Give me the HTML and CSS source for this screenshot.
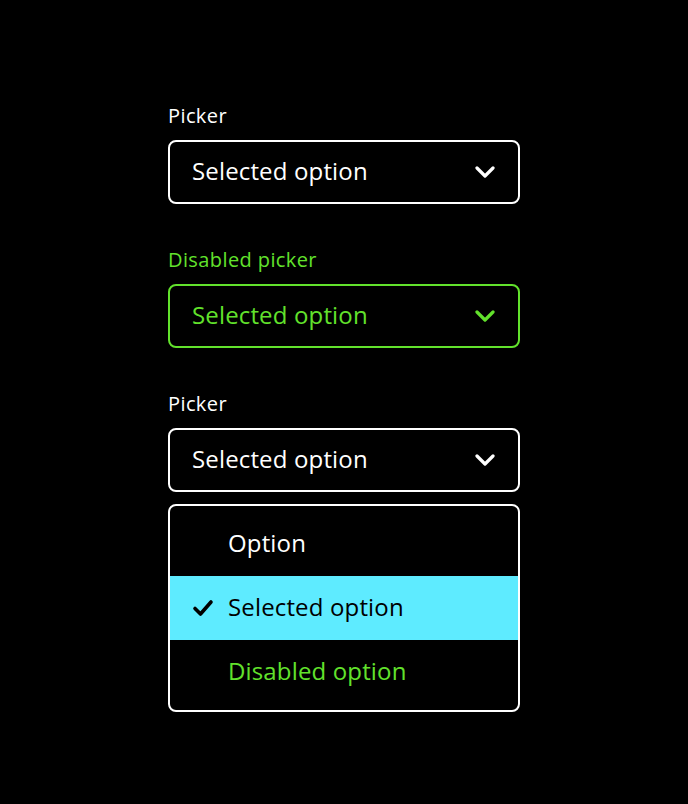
FILE: index.html
```html
<!DOCTYPE html>
<html>
<head>
<meta charset="utf-8">
<link rel="stylesheet" href="styles.css">
</head>
<body>
<main class="stack">
  <section class="field">
    <div class="label">Picker</div>
    <div class="picker">
      <span class="value">Selected option</span>
      <svg class="chev" width="20" height="12" viewBox="0 0 20 12"><path d="M2 2 L10 10 L18 2" fill="none" stroke="currentColor" stroke-width="3.2" stroke-linecap="round" stroke-linejoin="round"/></svg>
    </div>
  </section>
  <section class="field disabled">
    <div class="label">Disabled picker</div>
    <div class="picker">
      <span class="value">Selected option</span>
      <svg class="chev" width="20" height="12" viewBox="0 0 20 12"><path d="M2 2 L10 10 L18 2" fill="none" stroke="currentColor" stroke-width="3.2" stroke-linecap="round" stroke-linejoin="round"/></svg>
    </div>
  </section>
  <section class="field">
    <div class="label">Picker</div>
    <div class="picker">
      <span class="value">Selected option</span>
      <svg class="chev" width="20" height="12" viewBox="0 0 20 12"><path d="M2 2 L10 10 L18 2" fill="none" stroke="currentColor" stroke-width="3.2" stroke-linecap="round" stroke-linejoin="round"/></svg>
    </div>
    <ul class="menu">
      <li class="item"><span class="check"></span><span>Option</span></li>
      <li class="item selected"><span class="check"><svg width="22" height="18" viewBox="0 0 22 18"><path d="M3 9.5 L8.5 15 L19 3" fill="none" stroke="currentColor" stroke-width="3.6" stroke-linecap="round" stroke-linejoin="round"/></svg></span><span>Selected option</span></li>
      <li class="item dis"><span class="check"></span><span>Disabled option</span></li>
    </ul>
  </section>
</main>
</body>
</html>
```

FILE: styles.css
```css
html, body {
  margin: 0;
  padding: 0;
  background: #000;
}
body {
  font-family: "Open Sans", "Noto Sans", sans-serif;
  color: #fff;
}
.stack {
  width: 352px;
  margin: 0 auto;
  padding-top: 104px;
  display: flex;
  flex-direction: column;
  gap: 44px;
}
.field {
  display: flex;
  flex-direction: column;
  gap: 12px;
}
.label {
  font-size: 20px;
  letter-spacing: 0.4px;
  line-height: 24px;
  height: 24px;
}
.picker {
  box-sizing: border-box;
  height: 64px;
  border: 2px solid #fff;
  border-radius: 8px;
  display: flex;
  align-items: center;
  justify-content: space-between;
  padding: 0 22px 2px 22px;
}
.value {
  font-size: 24px;
  letter-spacing: 0.15px;
  line-height: 30px;
}
.chev {
  display: block;
  color: #fff;
  margin-right: 1px;
  margin-top: 1px;
}
.disabled {
  color: #62e22c;
}
.disabled .picker {
  border-color: #62e22c;
}
.disabled .chev {
  color: #62e22c;
}
.menu {
  list-style: none;
  margin: 0;
  padding: 6px 0;
  border: 2px solid #fff;
  border-radius: 8px;
}
.item {
  box-sizing: border-box;
  height: 64px;
  display: flex;
  align-items: center;
  font-size: 24px;
  letter-spacing: 0.15px;
  padding-left: 22px;
  padding-bottom: 4px;
}
.check {
  width: 36px;
  display: flex;
  align-items: center;
}
.check svg {
  display: block;
  margin-top: 4px;
}
.selected {
  background: #5eebff;
  color: #000;
}
.dis {
  color: #62e22c;
}
```
